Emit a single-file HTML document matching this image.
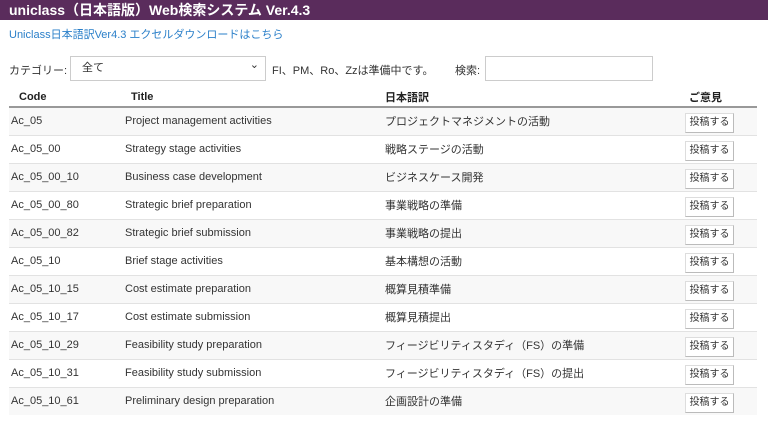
<!DOCTYPE html>
<html><head><meta charset="utf-8"><style>
*{margin:0;padding:0;box-sizing:border-box}
body{width:768px;height:421px;overflow:hidden;background:#fff;font-family:"Liberation Sans","Noto Sans CJK JP",sans-serif;font-size:11px;color:#333}
.hd{height:20px;background:#5a2c5c;color:#fff;font-weight:bold;font-size:14px;line-height:20px;padding-left:9px}
.lk{position:absolute;left:9px;top:26px;color:#2a7fc9;font-size:11px}
.lab{position:absolute;top:62px;font-size:11px}
.sel{position:absolute;left:70px;top:56px;width:196px;height:25px;border:1px solid #ccc;padding-left:11px;line-height:23px}
.sel:after{content:"⌄";position:absolute;right:6px;top:-3px;font-size:11px}
.inp{position:absolute;left:485px;top:56px;width:168px;height:25px;border:1px solid #ccc}
table{position:absolute;left:9px;top:88px;width:748px;border-collapse:collapse;table-layout:fixed}
th{font-weight:bold;text-align:left;height:19px;border-bottom:2px solid #999;font-size:11px;color:#222}
td{height:28px;border-top:1px solid #e2e2e2;font-size:11px;vertical-align:middle;white-space:nowrap}
tr:nth-child(even) td{background:#f8f8f8}
.b{display:inline-block;width:49px;height:20px;border:1px solid #ddd;border-right-color:#bbb;border-bottom-color:#bbb;background:#fff;font-size:10px;text-align:center;line-height:18px;margin-top:3px}
td:first-child{padding-left:2px}td:nth-child(2){padding-left:2px}td:nth-child(3){padding-left:0}td:nth-child(4){padding-left:0}
</style></head><body>
<div class="hd">uniclass（日本語版）Web検索システム Ver.4.3</div>
<div class="lk">Uniclass日本語訳Ver4.3 エクセルダウンロードはこちら</div>
<div class="lab" style="left:9px">カテゴリー:</div>
<div class="sel">全て</div>
<div class="lab" style="left:272px">FI、PM、Ro、Zzは準備中です。</div>
<div class="lab" style="left:455px">検索:</div>
<div class="inp"></div>
<table>
<colgroup><col style="width:114px"><col style="width:262px"><col style="width:300px"><col></colgroup>
<tr><th style="padding-left:10px">Code</th><th style="padding-left:8px">Title</th><th style="padding-left:0">日本語訳</th><th style="padding-left:4px">ご意見</th></tr>
<tr><td>Ac_05</td><td>Project management activities</td><td>プロジェクトマネジメントの活動</td><td><span class="b">投稿する</span></td></tr>
<tr><td>Ac_05_00</td><td>Strategy stage activities</td><td>戦略ステージの活動</td><td><span class="b">投稿する</span></td></tr>
<tr><td>Ac_05_00_10</td><td>Business case development</td><td>ビジネスケース開発</td><td><span class="b">投稿する</span></td></tr>
<tr><td>Ac_05_00_80</td><td>Strategic brief preparation</td><td>事業戦略の準備</td><td><span class="b">投稿する</span></td></tr>
<tr><td>Ac_05_00_82</td><td>Strategic brief submission</td><td>事業戦略の提出</td><td><span class="b">投稿する</span></td></tr>
<tr><td>Ac_05_10</td><td>Brief stage activities</td><td>基本構想の活動</td><td><span class="b">投稿する</span></td></tr>
<tr><td>Ac_05_10_15</td><td>Cost estimate preparation</td><td>概算見積準備</td><td><span class="b">投稿する</span></td></tr>
<tr><td>Ac_05_10_17</td><td>Cost estimate submission</td><td>概算見積提出</td><td><span class="b">投稿する</span></td></tr>
<tr><td>Ac_05_10_29</td><td>Feasibility study preparation</td><td>フィージビリティスタディ（FS）の準備</td><td><span class="b">投稿する</span></td></tr>
<tr><td>Ac_05_10_31</td><td>Feasibility study submission</td><td>フィージビリティスタディ（FS）の提出</td><td><span class="b">投稿する</span></td></tr>
<tr><td>Ac_05_10_61</td><td>Preliminary design preparation</td><td>企画設計の準備</td><td><span class="b">投稿する</span></td></tr>
</table>
</body></html>
